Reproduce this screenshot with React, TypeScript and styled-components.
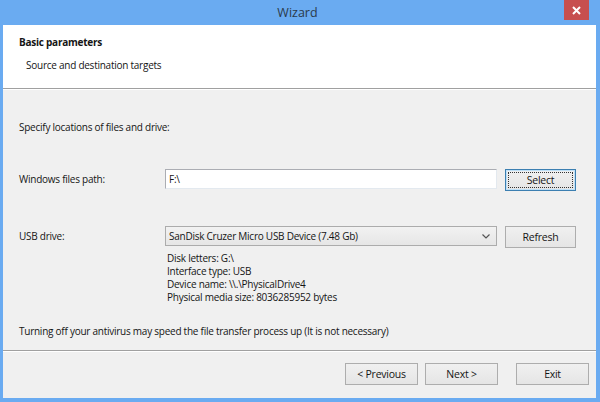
import React from "react";
import styled, { createGlobalStyle } from "styled-components";

const GlobalStyle = createGlobalStyle`
  html, body {
    margin: 0;
    padding: 0;
    background: #ffffff;
  }
  * {
    box-sizing: border-box;
  }
`;

const font = `"Open Sans", "Noto Sans", "Liberation Sans", sans-serif`;

const Window = styled.div`
  width: 600px;
  height: 402px;
  background: #6aabf1;
  display: flex;
  flex-direction: column;
  padding: 0 4px 4px 3px;
  font-family: ${font};
  font-size: 10px;
  letter-spacing: -0.25px;
  color: #151515;
`;

const TitleBar = styled.div`
  height: 25px;
  display: grid;
  grid-template-columns: 1fr auto 1fr;
  align-items: start;
  margin: 0 1px 0 -3px;
`;

const Title = styled.div`
  grid-column: 2;
  font-size: 12.5px;
  letter-spacing: 0;
  line-height: 26px;
  color: #2b3a4a;
`;

const CloseButton = styled.div`
  grid-column: 3;
  justify-self: end;
  width: 25px;
  height: 20px;
  margin-right: 6px;
  background: #c74f4f;
  display: flex;
  align-items: center;
  justify-content: center;
`;

const Client = styled.div`
  flex: 1;
  display: flex;
  flex-direction: column;
  background: #f0f0f0;
`;

const Header = styled.div`
  height: 63px;
  background: #ffffff;
  padding: 9px 0 0 16px;
`;

const HeaderTitle = styled.div`
  font-weight: 700;
  line-height: 16px;
`;

const HeaderSub = styled.div`
  margin: 7px 0 0 7px;
  line-height: 16px;
`;

const Divider = styled.div`
  height: 2px;
  border-top: 1px solid #a0a0a0;
  border-bottom: 1px solid #ffffff;
`;

const Body = styled.div`
  flex: 1;
  display: flex;
  flex-direction: column;
  padding: 29px 20px 0 16px;
`;

const Text = styled.div<{ $mt?: number }>`
  line-height: 16px;
  margin-top: ${(p) => p.$mt ?? 0}px;
`;

const Row = styled.div<{ $mt: number }>`
  display: grid;
  grid-template-columns: 138px 332px 71px;
  column-gap: 8px;
  align-items: start;
  margin-top: ${(p) => p.$mt}px;
`;

const Label = styled.div`
  line-height: 16px;
  padding-top: 2px;
`;

const TextBox = styled.div`
  height: 20px;
  background: #ffffff;
  border: 1px solid #abadb3;
  border-color: #abadb3 #e3e9ef #e3e9ef #abadb3;
  padding: 0 3px;
  line-height: 18px;
`;

const Combo = styled.div`
  height: 20px;
  border: 1px solid #acacac;
  background: linear-gradient(#f2f2f2, #e6e6e6);
  display: flex;
  align-items: center;
  justify-content: space-between;
  padding: 0 6px 0 3px;
  line-height: 18px;
`;

const Button = styled.div<{ $focused?: boolean; $width?: number }>`
  width: ${(p) => p.$width ?? 71}px;
  height: 22px;
  border: 1px solid ${(p) => (p.$focused ? "#3c7fb1" : "#adadad")};
  background: linear-gradient(#f0f0f0, #e5e5e5);
  display: flex;
  align-items: center;
  justify-content: center;
  padding: 1px;
  color: #151515;
  font-size: 10.5px;
  box-shadow: ${(p) => (p.$focused ? "inset 0 0 0 1px #bfe0f7" : "none")};
`;

const FocusRing = styled.div`
  flex: 1;
  align-self: stretch;
  border: 1px dotted #333;
  display: flex;
  align-items: center;
  justify-content: center;
  margin: 1px;
`;

const Info = styled.div`
  grid-column: 2;
  margin-top: 4px;
  padding-left: 2px;
  line-height: 13px;
`;

const Footer = styled.div`
  height: 46px;
  display: flex;
  justify-content: flex-end;
  align-items: flex-start;
  padding: 11px 7px 0 0;
  gap: 7px;
`;

const Spacer = styled.div`
  width: 4px;
`;

export default function App() {
  return (
    <>
      <GlobalStyle />
      <Window>
        <TitleBar>
          <Title>Wizard</Title>
          <CloseButton>
            <svg width="9" height="9" viewBox="0 0 9 9">
              <path d="M1 1 L8 8 M8 1 L1 8" stroke="#fff" strokeWidth="2" />
            </svg>
          </CloseButton>
        </TitleBar>
        <Client>
          <Header>
            <HeaderTitle>Basic parameters</HeaderTitle>
            <HeaderSub>Source and destination targets</HeaderSub>
          </Header>
          <Divider />
          <Body>
            <Text>Specify locations of files and drive:</Text>
            <Row $mt={34}>
              <Label>Windows files path:</Label>
              <TextBox>F:\</TextBox>
              <Button $focused>
                <FocusRing>Select</FocusRing>
              </Button>
            </Row>
            <Row $mt={35}>
              <Label>USB drive:</Label>
              <Combo>
                <span>SanDisk Cruzer Micro USB Device (7.48 Gb)</span>
                <svg width="8" height="5" viewBox="0 0 8 5">
                  <path d="M0.5 0.5 L4 4 L7.5 0.5" fill="none" stroke="#555" strokeWidth="1.2" />
                </svg>
              </Combo>
              <Button>Refresh</Button>
              <Info>
                Disk letters: G:\
                <br />
                Interface type: USB
                <br />
                Device name: \\.\PhysicalDrive4
                <br />
                Physical media size: 8036285952 bytes
              </Info>
            </Row>
            <Text $mt={19}>
              Turning off your antivirus may speed the file transfer process up (It is not necessary)
            </Text>
          </Body>
          <Divider />
          <Footer>
            <Button $width={73}>&lt; Previous</Button>
            <Button $width={73}>Next &gt;</Button>
            <Spacer />
            <Button $width={73}>Exit</Button>
          </Footer>
        </Client>
      </Window>
    </>
  );
}
